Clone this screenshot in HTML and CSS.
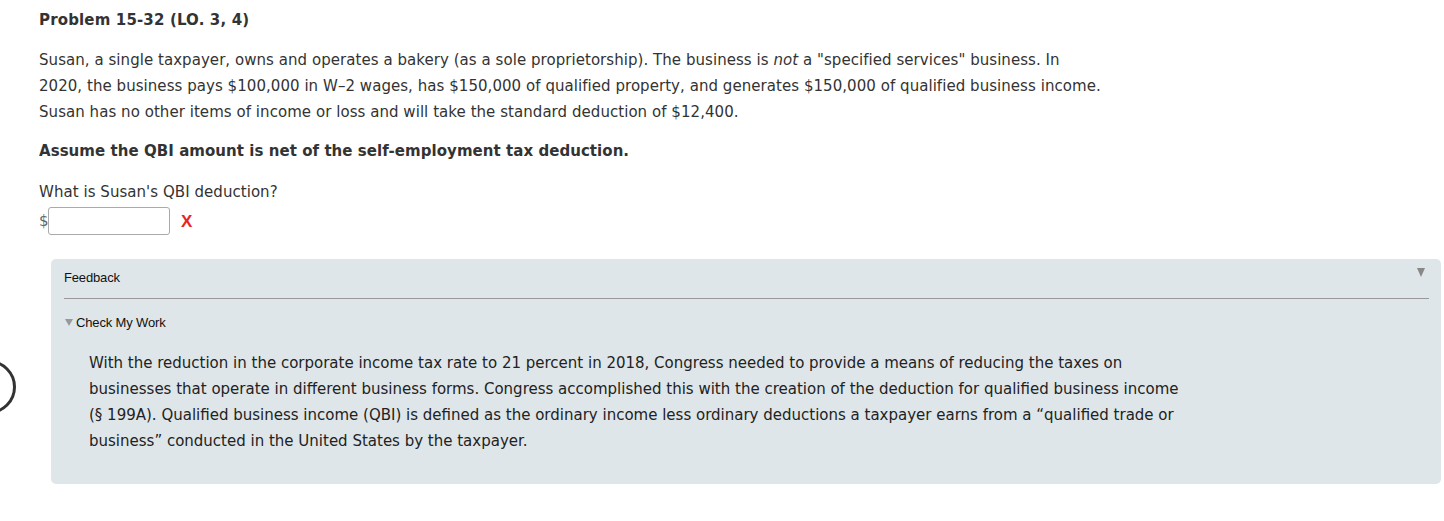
FILE: index.html
```html
<!DOCTYPE html>
<html>
<head>
<meta charset="utf-8">
<link rel="stylesheet" href="styles.css">
</head>
<body>
<div class="circle"></div>
<div class="page">
  <h1 class="title">Problem 15-32 (LO. 3, 4)</h1>
  <p class="para">Susan, a single taxpayer, owns and operates a bakery (as a sole proprietorship). The business is <i>not</i> a "specified services" business. In<br>2020, the business pays $100,000 in W–2 wages, has $150,000 of qualified property, and generates $150,000 of qualified business income.<br>Susan has no other items of income or loss and will take the standard deduction of $12,400.</p>
  <p class="para bold">Assume the QBI amount is net of the self-employment tax deduction.</p>
  <p class="para q">What is Susan's QBI deduction?</p>
  <div class="answer">
    <span class="dollar">$</span><input class="field" type="text"><span class="wrong">X</span>
  </div>
  <div class="panel">
    <div class="panel-head">
      <span>Feedback</span>
      <span class="tri"></span>
    </div>
    <div class="check"><span class="tri small"></span>Check My Work</div>
    <p class="fb">With the reduction in the corporate income tax rate to 21 percent in 2018, Congress needed to provide a means of reducing the taxes on<br>businesses that operate in different business forms. Congress accomplished this with the creation of the deduction for qualified business income<br>(§ 199A). Qualified business income (QBI) is defined as the ordinary income less ordinary deductions a taxpayer earns from a “qualified trade or<br>business” conducted in the United States by the taxpayer.</p>
  </div>
</div>
</body>
</html>
```
FILE: styles.css
```css
html, body { margin: 0; padding: 0; background: #fff; }
body { font-family: "DejaVu Sans", Verdana, sans-serif; color: #333; font-size: 15px; overflow: hidden; letter-spacing: 0.05px; }
.page { padding: 10px 3px 0 39px; }
.title { font-size: 15px; font-weight: bold; margin: 0; line-height: 20px; letter-spacing: 0.15px; }
.para { margin: 0; line-height: 26px; }
.title + .para { margin-top: 17px; }
.bold { font-weight: bold; margin-top: 13px; }
.q { margin-top: 15px; }
.answer { display: flex; align-items: center; height: 30px; margin-top: 1px; }
.dollar { color: #666; width: 9px; }
.field { width: 122px; border: 1px solid #aaa; border-radius: 3px; box-sizing: border-box; height: 28px; margin: 0; padding: 0; }
.wrong { color: #e8251f; font-weight: bold; margin-left: 11px; font-family: "Liberation Sans", Arial, sans-serif; font-size: 17px; margin-top: 2px; }
.panel { margin: 23px 0 0 12px; background: #dfe6e9; border-radius: 5px; padding: 0 12px 30px 13px; height: 225px; box-sizing: border-box; }
.panel-head { display: flex; justify-content: space-between; align-items: flex-start; font-family: "Liberation Sans", Arial, sans-serif; font-size: 13px; line-height: 16px; color: #111; height: 40px; box-sizing: border-box; padding-top: 11px; border-bottom: 1px solid #999; letter-spacing: -0.15px; }
.tri { width: 0; height: 0; border-left: 4.5px solid transparent; border-right: 4.5px solid transparent; border-top: 9px solid #888; margin: 0 4px 0 0; position: relative; top: -2px; }
.check { font-family: "Liberation Sans", Arial, sans-serif; font-size: 13px; color: #111; display: flex; align-items: center; height: 22px; margin-top: 12px; letter-spacing: -0.15px; }
.tri.small { border-left-width: 4.5px; border-right-width: 4.5px; border-top: 7px solid #999; margin: 0 3px 0 1px; top: 0; }
.fb { margin: 17px 0 0 25px; line-height: 26px; color: #222; letter-spacing: 0; }
.circle { position: absolute; left: -38px; top: 360px; width: 48px; height: 48px; border: 3px solid #333; border-radius: 50%; }
```
